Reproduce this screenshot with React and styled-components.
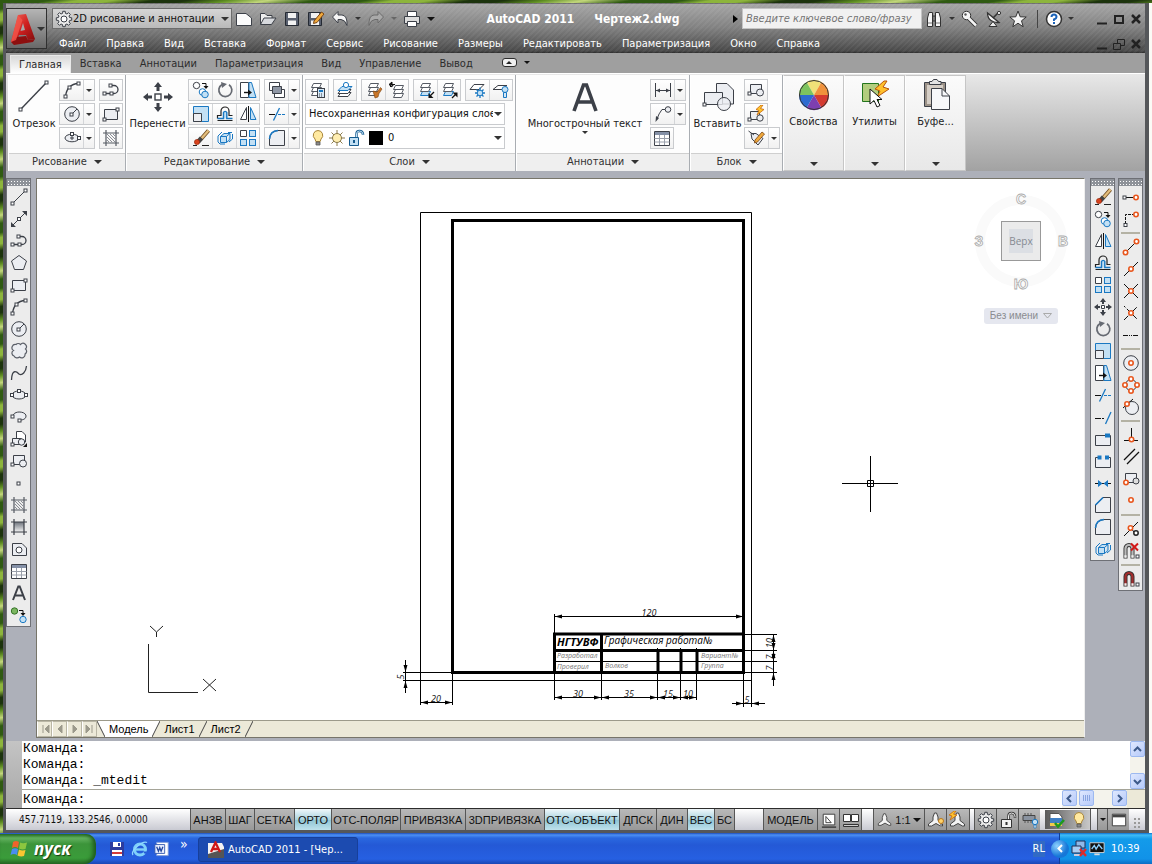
import React from 'react';
import styled, { createGlobalStyle, css } from 'styled-components';

const K = '#3c4048';
const B = '#1a78c2';
const LB = '#c3e0f4';
const O = '#e8561d';
const G = '#eceef2';
const ui = `"DejaVu Sans Condensed", "DejaVu Sans", sans-serif`;

const Global = createGlobalStyle`
  * { box-sizing: border-box; }
  body { margin: 0; font: 11px/14px ${ui}; color: #222; }
  button, select, input { font: inherit; color: inherit; margin: 0; }
  button { border: 0; padding: 0; background: none; white-space: nowrap; }
  svg { display: block; flex: none; }
`;

/* ---------- drawing helpers ---------- */
const N = ({ x, y }) => <rect x={x - 1.5} y={y - 1.5} width="3" height="3" fill="#fff" stroke={K} />;
const R = ({ x, y }) => <circle cx={x} cy={y} r="2.2" fill="#fff" stroke={O} strokeWidth="1.6" />;
const L = ({ d, c = K, f = 'none', w = 1, ...o }) => <path d={d} stroke={c} fill={f} strokeWidth={w} {...o} />;

const Sheets = ({ b }) => (
  <>
    <L d="M5.5 10.5H13.5L11.5 14.5H3.5Z" f={b ? LB : '#fff'} c={b || '#555a63'} />
    <L d="M5.5 6.5H13.5L11.5 10.5H3.5Z" f="#fff" c="#555a63" />
    <L d="M5.5 2.5H13.5L11.5 6.5H3.5Z" f="#fff" c="#555a63" />
  </>
);
const Bolt = ({ x = 0, y = 0 }) => (
  <path transform={`translate(${x} ${y})`} d="M5 0L0 4.500L3 5.500L1 10L8 4.500L4.500 3.500L7 0Z" fill="#ffc52e" stroke="#c8660a" strokeWidth=".8" />
);
const Bulb = () => (
  <>
    <path d="M9 1.500a4.800 4.800 0 0 1 3 8.500l-.8 2.500H6.800L6 10A4.800 4.800 0 0 1 9 1.500Z" fill="#ffe9a0" stroke="#a8853a" />
    <path d="M7 13h4v3H7Z" fill="#8a8a8a" stroke="#555" strokeWidth=".8" />
  </>
);
const Magnet = ({ c, e }) => (
  <>
    <path d="M3.500 16.500V6.500a3.500 3.500 0 0 1 7 0v10" fill="none" stroke="#333" strokeWidth="4" />
    <path d="M3.500 15.500V6.500a3.500 3.500 0 0 1 7 0v9" fill="none" stroke={c} strokeWidth="2.200" />
    <path d="M2.400 14.500h2.200M9.400 14.500h2.200" stroke={e} strokeWidth="2.500" /><N x={15.5} y={14.5} />
  </>
);
const Annot = () => <path d="M7.500 2H9.500L11 6V9.500L15.500 13V15H13.500L9 12.500L4.500 15H1.500V13L6 9.500V6Z" fill="#f4f4f4" stroke="#444" />;

const gearPath = Array.from({ length: 8 }, (_, i) => {
  const at = (r, a) => {
    const t = ((i * 45 + a) * Math.PI) / 180;
    return `${(9 + r * Math.cos(t)).toFixed(2)} ${(9 + r * Math.sin(t)).toFixed(2)}`;
  };
  return `${i ? 'L' : 'M'}${at(5.8, -14)}L${at(7.8, -9)}L${at(7.8, 9)}L${at(5.8, 14)}`;
}).join('') + 'Z';

const icons = {
  line: <><L d="M2 16L16 2" /><N x={2.5} y={15.5} /><N x={15.5} y={2.5} /></>,
  xline: <><L d="M3 15L15 3" /><path d="M17 1v5l-5-5ZM1 17v-5l5 5Z" fill={K} /><N x={9} y={9} /></>,
  pline: <><L d="M2 12.500H12a4 4 0 0 0 0-8H9" w={1.3} /><N x={2.5} y={12.5} /><N x={9.5} y={12.5} /><N x={8.5} y={4.5} /></>,
  polygon: <L d="M9 1.500L16.500 7L13.500 15.500H4.500L1.500 7Z" f={G} />,
  rect: <><L d="M2.500 4.500H15.500V14.500H2.500Z" f={G} /><N x={2.5} y={14.5} /><N x={15.5} y={4.5} /></>,
  arc: <><L d="M2.500 15.500Q4 3 15.500 2.500" w={1.3} /><N x={2.5} y={15.5} /><N x={6.5} y={6.5} /><N x={15.5} y={2.5} /></>,
  circle: <><circle cx="9" cy="9" r="7.300" fill={G} stroke={K} /><L d="M9 9L14 4" /><N x={8.5} y={9.5} /></>,
  cloud: <L d="M3.500 8.500A3.300 3.300 0 0 1 6 2.500A3 3 0 0 1 10.500 2.500A3.300 3.300 0 0 1 15.500 7A3 3 0 0 1 15 12A3.300 3.300 0 0 1 9.500 15A3.500 3.500 0 0 1 4 14A3 3 0 0 1 3.500 8.500Z" f={G} w={1.2} c="#5b5f68" />,
  spline: <L d="M1.500 16C2 4 7 8 9 10C12 12 16 8 16.500 2" w={1.3} />,
  ellipse: <><ellipse cx="9" cy="9" rx="7" ry="4" fill={G} stroke={K} /><N x={2} y={9} /><N x={16} y={9} /><N x={9} y={5} /></>,
  ellipse2: <><ellipse cx="9" cy="9" rx="7" ry="3.800" fill={G} stroke={K} /><L d="M9 7v4M7 9h4" /><N x={9} y={5} /><N x={16} y={9} /></>,
  ellarc: <><L d="M2.500 9C3 2 16 3 16 8C16 11 13 12 10 12" f={G} /><N x={2.5} y={8.5} /><N x={9.5} y={12.5} /></>,
  insert: <><L d="M6.500 9V1.500H12L15.500 5V12H9" f="#fff" /><L d="M2.500 8.500H11.500V14.500H2.500Z" f={G} /><N x={2.5} y={14.5} /><circle cx="11.500" cy="12" r="3.200" fill={G} stroke={K} /><path d="M17 13v4h-4Z" fill="#111" /></>,
  block: <><L d="M3.500 3.500H14.500V12.500H3.500Z" f={G} /><N x={2.5} y={12.5} /><circle cx="13" cy="11.500" r="3.500" fill={G} stroke={K} /></>,
  editblock: <><L d="M3.500 6.500H12.500V14.500H3.500Z" f={G} /><N x={2.5} y={14.5} /><circle cx="13" cy="13" r="3.200" fill={G} stroke={K} /><Bolt x={9} /></>,
  editattr: <><L d="M3 4.500H8L15 9.500L10 16L4 10Z" f={G} /><L d="M.500 2L6 6" /><path d="M7 11L14 3L16.500 5L9.500 13L6.500 14Z" fill="#f0a93c" stroke="#7a4512" strokeWidth=".8" /></>,
  point: <N x={8.5} y={9.5} />,
  hatch: <><L d="M4 1V17M14 1V17M1 4H17M1 14H17" w={1.2} c="#555a63" /><L d="M5 8L10 13M5 5L13 13M8 5L13 10M11 5L13 7M5 11L7 13" c="#8a8d94" /></>,
  gradient: <><path d="M4 4h10v10H4Z" fill="url(#hg)" /><L d="M4 1V17M14 1V17M1 4H17M1 14H17" w={1.2} /></>,
  region: <><L d="M2.500 3.500H12L16.500 8V15.500H2.500Z" f={G} /><circle cx="9" cy="10" r="3" fill="#fff" stroke={K} /></>,
  table: <><L d="M1.500 2.500H16.500V16.500H1.500Z" f="#fff" /><path d="M2 3H16V6H2Z" fill="#8490a6" /><L d="M1.500 9.500H16.500M1.500 13H16.500M6.500 6V16M11.500 6V16" c="#9aa0ab" /></>,
  text: <L d="M3 16L8.300 2.500H9.700L15 16M5 11.500H13" w={2} />,
  addsel: <><circle cx="4.500" cy="5" r="3.200" fill="#7bb661" stroke="#37752a" /><circle cx="13" cy="13.500" r="3.200" fill={LB} stroke={B} /><L d="M9 4.500H13V7" c="#111" /><path d="M10.500 7h5L13 10Z" fill="#111" /></>,
  erase: <>
    <path d="M16.500 1.500L9 10" stroke="#6e4a1e" strokeWidth="4" /><path d="M16.500 1.500L9 10" stroke="#e3bd7c" strokeWidth="2.400" />
    <path d="M9.500 9L6 13" stroke="#444" strokeWidth="4.500" /><circle cx="5" cy="13" r="2.600" fill="#d8421c" stroke="#8f2408" strokeWidth=".6" />
    <L d="M1 16.500H5M10 16.500H17" c="#222" />
  </>,
  copy: <><circle cx="4.500" cy="4.500" r="3.200" fill="#fff" stroke={K} /><circle cx="10.500" cy="11" r="3.300" fill="#fff" stroke={B} /><circle cx="13" cy="13.500" r="3.300" fill={LB} stroke={B} /><L d="M10 2.500H14V5" c="#111" /><path d="M11.500 5h5L14 8Z" fill="#111" /></>,
  mirror: <><L d="M7.500 2.500V14.500H1.500Z" f="#fff" /><L d="M11.500 2.500V14.500H17Z" f={LB} c={B} /><L d="M9.500 1V17" c="#111" /></>,
  offset: <><L d="M1.500 13.500V10.500H5V6A4 4 0 0 1 13 6V10.500H16.500M1.500 15.500H16.500" c="#222" w={1.2} /><L d="M1.500 13.500H7.500V7.500A1.800 1.800 0 0 1 10.800 7.500V13.500H16.500" c={B} w={1.400} f={LB} /></>,
  array: <><L d="M1.500 1.500H7.500V7.500H1.500Z" f="#fff" />{[[10.5, 1.5], [1.5, 10.5], [10.5, 10.5]].map(([x, y]) => <rect key={`${x}${y}`} x={x} y={y} width="6" height="6" fill={LB} stroke={B} />)}</>,
  move: <><path d="M9 0l3 4H6ZM9 18l3-4H6ZM0 9l4-3v6ZM18 9l-4-3v6Z" fill={K} /><L d="M9 3v3M9 12v3M3 9h3M12 9h3" w={2} /><L d="M7.500 7.500H10.500V10.500H7.500Z" f="#fff" /></>,
  rotate: <><L d="M6 3.500A6.500 6.500 0 1 0 13 3.700" c="#666a72" w={1.7} /><path d="M5 1l6 2-5 4Z" fill="#666a72" /></>,
  scale: <><L d="M1.500 1.500H16.500V16.500H1.500Z" f={LB} c={B} /><L d="M1.500 8.500H9.500V16.500H1.500Z" f={G} /></>,
  stretch: <><L d="M1.500 1.500H9.500V16.500H1.500Z" f="#fff" /><path d="M10 1.500H12.500L17 16.500H10Z" fill={LB} stroke={B} /><L d="M5 11.500H10" c="#111" w={1.4} /><path d="M9 8.500v6l4-3Z" fill="#111" /></>,
  trim: <><L d="M1 9.500H7" c="#111" /><L d="M10 9.500H17" c={B} strokeDasharray="3 1" /><L d="M5.500 15.500L11.500 3" c={B} w={1.3} /></>,
  extend: <><L d="M1 10.500H11" c="#111" strokeDasharray="6 1 2 1" /><L d="M11.500 16L17 4" c={B} w={1.3} /></>,
  breakpt: <><L d="M1.500 5.500H16.500V15.500H1.500Z" f={G} /><path d="M11 3.500h5v4h-5Z" fill={B} /></>,
  brk: <><L d="M1.500 5.500H16.500V15.500H1.500Z" f={G} /><path d="M6.500 4h5v3h-5Z" fill="#ececec" /><path d="M3.500 3.500h4v4h-4ZM11 3.500h4v4h-4Z" fill={B} /></>,
  join: <><L d="M1 9.500H17" c="#111" /><path d="M4 6v7l4.500-3.500ZM14 6v7L9.500 9.500Z" fill={B} /></>,
  chamfer: <><L d="M9 1.500H16.500V16.500H1.500V9L9 1.500" f={G} /><L d="M1.500 9L9 1.500" c={B} w={1.600} /></>,
  fillet: <><L d="M10 1.500H16.500V16.500H1.500V10Q2 2 10 1.500" f={G} /><L d="M1.500 10Q2 2 10 1.500" c={B} w={1.600} /></>,
  explode: <><L d="M4.500 7.500H10.500V13.500H4.500ZM4.500 7.500L8 4.500H14L10.500 7.500M14 4.500V10.500L10.500 13.500" f={LB} c={B} /><L d="M2 7V13L4 15H9M2 7L6 3M13 13L16.500 10V5M12 3.500H16" c={B} /></>,
  order: <><L d="M1.500 1.500H11.500V9.500H1.500Z" f="#fff" /><L d="M6.500 8.500H16.500V16.500H6.500Z" f="#fff" /><path d="M4.500 5.500h9v7h-9Z" fill="#8f97a5" stroke={K} /></>,
  temptrack: <><L d="M4 9.500H13" c="#111" /><N x={2.5} y={9.5} /><R x={14} y={9.5} /></>,
  snapfrom: <><L d="M3.500 14V4.500H12" c="#111" strokeDasharray="3 1" /><N x={3.5} y={15} /><R x={14} y={4.5} /></>,
  endpoint: <><L d="M3 15L15 3" c="#111" /><R x={3.5} y={14.5} /><R x={14.5} y={3.5} /></>,
  midpoint: <><L d="M2 16L16 2" c="#111" /><R x={9} y={9} /></>,
  intersect: <><L d="M2 2L16 16M2 16L16 2" c="#111" /><R x={9} y={9} /></>,
  apparent: <><L d="M2 2L16 16" c="#111" strokeDasharray="2 2 14 2 2" /><L d="M2 16L16 2" c="#111" strokeDasharray="6 2 2 2" /><R x={9} y={9} /></>,
  extension: <L d="M1 9.500H17" c="#111" strokeDasharray="5 1 1 1 1 1" />,
  center: <><circle cx="9" cy="9" r="7.300" fill={G} stroke={K} /><R x={9} y={9} /></>,
  quadrant: <><circle cx="9" cy="9" r="5.500" fill={G} stroke={K} /><R x={9} y={3} /><R x={9} y={15} /><R x={3} y={9} /><R x={15} y={9} /></>,
  tangent: <><circle cx="10" cy="10" r="6.500" fill={G} stroke={K} /><L d="M1 10L11 1" c="#111" /><R x={5} y={6} /></>,
  perp: <><L d="M9.500 2V14.500M2 14.500H16" c="#111" /><R x={9.5} y={13.5} /></>,
  parallel: <L d="M2 12L13 1M5 16L17 4" c="#111" w={1.3} />,
  snapinsert: <><L d="M3.500 3.500H14.500V12.500H3.500Z" f={G} /><circle cx="14" cy="11" r="3" fill="#ddd" stroke={K} /><R x={4} y={12.5} /></>,
  node: <R x={9} y={8} />,
  nearest: <><L d="M2 16L16 2" c="#111" /><L d="M8 7L12 12" c="#111" /><R x={8.5} y={8} /><circle cx="14" cy="13" r="2.200" fill="#fff" stroke="#222" strokeWidth="1.500" /></>,
  snapnone: <><Magnet c="#bbb" e="#eee" /><L d="M9 1.500L16 8.500M16 1.500L9 8.500" c="#d21818" w={2} /></>,
  osnap: <Magnet c="#a32d2d" e="#eee" />,
  layprops: <><Sheets /><rect x="9.500" y="7.500" width="7" height="9" fill="#d9e9f6" stroke={K} /><path d="M11 9h4v2h-4Z" fill={B} /><L d="M11 13h4M11 15h4" strokeDasharray="1 1" /></>,
  laymake: <><L d="M5 11.500H15L12 15.500H2Z" f="#fff" /><L d="M5 8.500H15L12 12.500H2Z" f="#fff" /><L d="M6 5.500H16L12 9.500H2Z" c={B} f={LB} /><circle cx="10" cy="4" r="2.600" fill="#fff" stroke={B} /></>,
  laymatch: <><Sheets /><path d="M8 10L12 11L15.500 6.500L17 8L14 12.500L13 16L10 17Z" fill="#c9762a" stroke="#7a4512" strokeWidth=".6" /></>,
  layprev: <><g transform="translate(2 2)"><Sheets /></g><L d="M7 3.500H2.500V6M1 3.500L4 1V6Z" c="#111" f="#111" /></>,
  layiso: <><Sheets b={B} /><path d="M17 11L13 15" stroke="#111" strokeWidth="1.300" /><path d="M11.500 12v5h5Z" fill="#111" /></>,
  layuniso: <><Sheets b={B} /><path d="M12 17L16 13" stroke="#111" strokeWidth="1.300" /><path d="M12.500 11.500h5v5Z" fill="#111" /></>,
  layfreeze: <><L d="M5 3.500H15L10 8.500H1Z" f="#fff" /><L d="M11 6.500V17M6 12H16M7.500 8.500L14.500 15.500M14.500 8.500L7.500 15.500" c={B} w={1.3} /><circle cx="11" cy="12" r="2.800" fill={LB} stroke={B} /></>,
  layoff: <><L d="M6 4.500H15L10 8.500H1Z" f="#fff" /><circle cx="13" cy="8.500" r="3" fill={LB} stroke={B} /><path d="M11.500 11.500h3v5h-3Z" fill="#d6e8f6" stroke={B} /></>,
  dim: <><L d="M1.500 2V16M16.500 2V16M2 9.500H16" /><path d="M2 9.500l4-2v4ZM16 9.500l-4-2v4Z" fill={K} /></>,
  leader: <><circle cx="14" cy="4.500" r="2.800" fill={G} stroke={K} /><L d="M11 4.500H8Q5 8 2.500 15" /><path d="M1.500 17L2 11L5 13Z" fill={K} /></>,
  bulb: <Bulb />,
  sun: <><L d="M9 1V17M1 9H17M3.500 3.500L14.500 14.500M14.500 3.500L3.500 14.500" c="#8a7a4a" /><circle cx="9" cy="9" r="4.500" fill="#ffeeb0" stroke="#8a7a4a" /></>,
  unlock: <><L d="M9.500 9V5Q9.500 2 12.500 2T16 5V6" c="#155b8f" w={2.4} /><L d="M9.500 9V5Q9.500 2 12.500 2T16 5V6" c={LB} w={1} /><path d="M2.500 8.500H11.500V16.500H2.500Z" fill={LB} stroke="#155b8f" /><L d="M7 11v3" c="#155b8f" w={2} /></>,
  new: <path d="M1.500 3.500H11L16.500 8V15.500H1.500Z" fill="#fbfbfb" stroke={K} />,
  open: <><path d="M1.500 14.500V3.500H6L8 5.500H13V8" fill="#eee" stroke={K} /><path d="M1.500 14.500L5 8H17L12.500 14.500Z" fill="#d7d9dd" stroke={K} /></>,
  save: <><path d="M2.500 2.500H15.500V15.500H2.500Z" fill="#59606f" stroke="#252a33" /><path d="M5 3H13V8H5ZM5 10.500H13V15H5Z" fill="#f2f2f2" /></>,
  saveas: <><path d="M1.500 2.500H14.500V15.500H1.500Z" fill="#59606f" stroke="#252a33" /><path d="M4 3H12V8H4ZM4 10.500H12V15H4Z" fill="#f2f2f2" /><path d="M7 11L14.500 2L17 4L10 12.500L6.500 13.500Z" fill="#f0a93c" stroke="#7a4512" /></>,
  undo: <path d="M1.500 7L7 1.500V5H11Q16.500 5.500 16 15.500Q14 9.500 10 9.500H7V13Z" fill="#f6f6f6" stroke={K} />,
  redo: <path d="M16.500 7L11 1.500V5H7Q1.500 5.500 2 15.500Q4 9.500 8 9.500H11V13Z" fill="#a9a9a9" stroke="#6b6b6b" />,
  print: <><path d="M4.500 1.500H13.500V7H4.500Z" fill="#fff" stroke={K} /><path d="M1.500 6.500H16.500V13.500H1.500Z" fill="#dcdcdc" stroke={K} /><path d="M4.500 11.500H13.500V16.500H4.500Z" fill="#fff" stroke={K} /></>,
  gear: <><path d={gearPath} fill="#ececec" stroke={K} /><circle cx="9" cy="9" r="3" fill="#fff" stroke={K} /></>,
  binoc: <><path d="M2.500 16.500V8L4 2.500H7.500V16.500ZM15.500 16.500V8L14 2.500H10.500V16.500Z" fill="#f5f5f5" stroke="#333" /><path d="M7.500 6H10.500V11H7.500Z" fill="#777" stroke="#333" /><L d="M3 13H7M11 13H15" c="#777" /></>,
  key: <><path d="M7.500 8L15 15.500M12 13L13.500 11.500" stroke="#333" strokeWidth="4.500" /><circle cx="5.500" cy="5.500" r="4.200" fill="#f5f5f5" stroke="#333" /><path d="M7.500 8L15 15.500" stroke="#f5f5f5" strokeWidth="2.500" /><circle cx="4.500" cy="4.500" r="1.200" fill="#555" /></>,
  dish: <><path d="M2.500 3C2.500 10 8 13 14 12.500Z" fill="#f5f5f5" stroke="#333" strokeWidth="1.300" /><path d="M8 8L14 2" stroke="#333" strokeWidth="1.600" /><path d="M4 16.500L8 11.500L12 16.500Z" fill="#eee" stroke="#333" /><circle cx="14" cy="3" r="1.600" fill="#fff" stroke="#333" /></>,
  star: <path d="M9 1L11.200 6.800L17.200 7L12.500 10.800L14.200 16.800L9 13.200L3.800 16.800L5.500 10.800L.8 7L6.800 6.800Z" fill="#f5f5f5" stroke="#333" />,
  paperL: <><path d="M2.500 2.500H15.500V14.500H2.500Z" fill="#fff" stroke="#333" /><path d="M5.500 5L11.500 12H5.500Z" fill="none" stroke="#333" /><L d="M1 17H17" c="#333" w={1.500} /></>,
  twoview: <><path d="M1.500 3.500H8.500V10.500H1.500ZM9.500 3.500H16.500V10.500H9.500Z" fill="#fff" stroke="#333" /><path d="M1.500 13.500H16.500V15.500H1.500Z" fill="#ccc" stroke="#333" /></>,
  annot: <Annot />,
  annotbulb: <><Annot /><circle cx="14" cy="10" r="2.500" fill="#ffd36b" stroke="#b8761b" /><path d="M13 13h2v3h-2Z" fill="#888" /></>,
  annotbolt: <><Annot /><g transform="scale(1 .9)"><Bolt /></g></>,
  unlockGray: <><L d="M9.500 9V5Q9.500 2 12.500 2T16 5V7" c="#333" w={2.4} /><L d="M9.500 9V5Q9.500 2 12.500 2T16 5V6.500" c="#eee" w={1} /><path d="M2.500 8.500H12.500V16.500H2.500Z" fill="#f4f4f4" stroke="#333" /><L d="M7.500 11v3" c="#333" w={2} /></>,
  chip: <><L d="M4 2V12M7 2V12M10 2V12" c="#555" /><path d="M2 4.500H14V9.500H2Z" fill="#8a93a0" stroke="#444" /><circle cx="14" cy="11" r="2.700" fill={LB} stroke={B} /><path d="M13 14h2v3h-2Z" fill="#eee" stroke={B} strokeWidth=".7" /></>,
  sheetok: <><path d="M3 2.500H12L15 6V10H3Z" fill="#fff" stroke="#555" /><path d="M3 7H15V15H3Z" fill="#3f7fc4" /><path d="M3 12H15V15H3Z" fill="#f2ca4c" /><L d="M8 12L11 15.500L17 9" c="#1d9a1d" w={2.500} /></>,
  win: <><path d="M1.500 2.500H16.500V15.500H1.500Z" fill="#fff" stroke="#333" /><path d="M2 3H16V6H2Z" fill="#444" /></>,
  floppy: <><path d="M2 2H16V16H2Z" fill="#2c3c9e" /><path d="M5 2H13V7H5ZM4 10H14V16H4Z" fill="#fff" /><path d="M10 3h2v3h-2Z" fill="#2c3c9e" /><path d="M4 12H14V14H4Z" fill="#d33c3c" /></>,
  ie: <><circle cx="9" cy="9.500" r="5.500" fill="none" stroke="#7fd0fa" strokeWidth="3" /><path d="M4 9.500H14" stroke="#7fd0fa" strokeWidth="2.400" /><path d="M12 11.500H17L14 14Z" fill="#2459d6" /><path d="M2 15C-1 11 12 0 16 2.500" fill="none" stroke="#8fd8ff" strokeWidth="1.300" /></>,
  word: <><path d="M3 1.500H16V16.500H3Z" fill="#fff" stroke="#7a98d8" /><path d="M1 4H12V14H1Z" fill="#eaf0ff" stroke="#3158b0" /><L d="M3 6.500L5 11.500L6.500 7.500L8 11.500L10 6.500" c="#2348a0" w={1.500} /></>,
  acad: <><path d="M1 2H15L17 6V17H1Z" fill="#f3f3f3" /><path d="M1 17V13L17 8V17Z" fill="#555" /><L d="M4 11L8.500 1.500L13 11M6 8H11" c="#d01818" w={2.3} /></>,
  net: <><path d="M6 1h9v7H6Z" fill="#8fb9e8" stroke="#222e55" /><path d="M2 6h9v7H2Z" fill="#a8cdf3" stroke="#222e55" /><L d="M4 15h6" c="#ccd" w={2} /><L d="M10 9L16 16M16 9L10 16" c="#e02a2a" w={2.4} /></>,
  monitor: <><path d="M1 2H17V13H1Z" fill="#111" stroke="#ddd" /><path d="M3 9L6 5L8 9L11 4L15 9" fill="none" stroke="#8ed2ff" strokeWidth="1.500" /><path d="M6 14H12V16H6Z" fill="#ddd" /></>,
};

const Icon = ({ name, size = 18 }) => (
  <svg width={size} height={size} viewBox="0 0 18 18" aria-hidden="true">{icons[name]}</svg>
);

const Caret = styled.span`
  display: block; flex: none; width: 0; height: 0;
  border: solid transparent;
  border-width: ${p => p.$s || 3}px ${p => p.$s || 3}px 0;
  border-top-color: ${p => p.$c || '#333'};
`;

/* ---------- window frame ---------- */
const Desktop = styled.div`
  min-height: 100vh; display: flex; flex-direction: column;
  background: repeating-linear-gradient(170deg, #2f5a12 0 9px, #8db53c 14px 20px, #1c330d 27px 33px, #5f8f22 40px, #c3d77c 47px, #2f5a12 55px);
`;
const Defs = styled.svg`position: absolute;`;
const Window = styled.main`
  flex: 1; display: flex; flex-direction: column; min-width: 0;
  margin: 3px 3px 0; background: #adb0b9;
  border: solid #55575a; border-width: 0 4px 3px 3px;
  box-shadow: 3px 0 0 #fbfbf6;
`;
const TitleBar = styled.header`
  display: flex; height: 50px; padding: 0 2px 0 0;
  background: repeating-linear-gradient(135deg, #ffffff0c 0 2px, transparent 2px 4px), linear-gradient(#3b3b3b 0, #a5a5a5 1px, #828282 24px, #494949 48px, #2c2c2c 50px);
`;
const AppButton = styled.button`
  width: 41px; height: 41px; margin-top: 5px; border: 1px solid #303030;
  background: linear-gradient(#b5b5b5, #8e8e8e 50%, #686868);
  display: flex; align-items: center; gap: 1px; padding-left: 3px;
`;
const TitleRows = styled.div`flex: 1; min-width: 0; display: flex; flex-direction: column;`;
const TitleRow = styled.div`display: flex; align-items: center; height: ${p => p.$h}px; padding-left: ${p => p.$pl}px;`;
const Workspace = styled.div`
  width: 180px; height: 21px;
  border: 1px solid #6c6c6c; background: linear-gradient(#d6d6d6, #b9b9b9);
  display: flex; align-items: center; padding: 0 2px;
`;
const PlainSelect = styled.select`
  appearance: none; border: 0; background: transparent; padding: 0; flex: 1; min-width: 0; height: 18px; outline: 0; color: #111;
`;
const Tool = styled.button`
  width: ${p => p.$w || 24}px; height: 22px; display: flex; align-items: center; justify-content: center;
`;
const Title = styled.h1`
  flex: 1; margin: 0; display: flex; justify-content: center; gap: 20px;
  font: bold 12px/16px ${ui}; color: #fff; white-space: nowrap;
`;
const Search = styled.input`
  width: 180px; height: 21px; border: 1px solid #c4c4c4; background: #f1f1f1; padding: 0 3px; font-style: italic; border-radius: 0;
  &::placeholder { color: #747474; opacity: 1; }
`;
const VLine = styled.span`width: 1px; height: 18px; background: #444; margin: 0 7px;`;
const Menu = styled.nav`flex: 1; display: flex; gap: 20px;`;
const MenuItem = styled.button`color: #fff;`;
const WinButtons = styled.div`display: flex; gap: 2px; margin-left: ${p => p.$ml || 0}px;`;

const winGlyphs = {
  min: <path d="M1 10.500H11" stroke="#222" strokeWidth="2" />,
  max: <path d="M2 3H10V10H2Z" stroke="#222" strokeWidth="2" fill="none" />,
  restore: <path d="M4.500 5V1.500H11.500V7.500H8M.5 5.500H7.500V11.500H.5Z" stroke="#222" fill="none" />,
  close: <path d="M2 2L10 10M10 2L2 10" stroke="#222" strokeWidth="2.500" />,
};
const WinButton = ({ kind, label }) => (
  <Tool $w={15} aria-label={label}><svg width="12" height="12" viewBox="0 0 12 12">{winGlyphs[kind]}</svg></Tool>
);

/* ---------- ribbon ---------- */
const TabStrip = styled.div`
  display: flex; align-items: flex-end; height: 20px; padding-left: 4px; background: #9f9f9f;
`;
const RibbonTab = styled.button`
  height: 18px; padding: 0 9px; color: #2c2c2c; line-height: 16px;
  ${p => p.$on && css`padding: 0 8px; background: linear-gradient(#d8d8d8, #fff); border: 1px solid #e9e9e9; border-bottom: 0; line-height: 14px;`}
`;
const Pill = styled.button`
  width: 15px; height: 9px; margin: 0 7px 6px 20px; border: 1px solid #2d2d2d; border-radius: 3px; background: #f0f0f0;
  display: flex; align-items: center; justify-content: center;
`;
const PillArrow = styled(Caret)`border-width: 0 3px 3px; border-bottom-color: #222;`;
const Ribbon = styled.section`
  display: flex; height: 98px; padding: 1px 0 0 2px;
  background: linear-gradient(#e8e8e8, #a2a2a2); border-top: 1px solid #fff;
`;
const Panel = styled.section`
  width: ${p => p.$w}px; display: flex; flex-direction: column; background: #fdfdfd;
  border-right: 1px solid #a9adb2; border-left: 1px solid #fff;
`;
const PanelBody = styled.div`flex: 1; display: flex; gap: 4px; padding: 4px 0 0 ${p => p.$pl || 4}px;`;
const PanelTitle = styled.button`
  height: 18px; border-top: 1px solid #cfcfcf; background: #efefef; color: #333; padding-bottom: 2px;
  display: flex; align-items: center; justify-content: center; gap: 7px;
`;
const Big = styled.button`
  width: ${p => p.$w}px; height: 66px; display: flex; flex-direction: column; align-items: center; color: #222;
  svg { margin-bottom: 4px; }
`;
const Stack = styled.div`display: flex; flex-direction: column; align-items: flex-start; gap: 2px;`;
const Line = styled.div`display: flex; gap: 4px;`;
const Group = styled.div`
  display: flex; border: 1px solid #c9cbce; height: 22px; background: linear-gradient(#fff, #f1f1f1);
`;
const Small = styled.button`
  width: ${p => (p.$arrow ? 12 : 24)}px; display: flex; align-items: center; justify-content: center;
  &:first-child { width: 23px; } &:last-child { width: ${p => (p.$arrow ? 11 : 23)}px; } &:only-child { width: 22px; }
  & + & { border-left: 1px solid #d3d5d8; }
`;
const Tools = ({ names, arrow }) => (
  <Group>
    {names.map(n => <Small key={n} aria-label={n}><Icon name={n} /></Small>)}
    {arrow && <Small $arrow aria-label="ещё"><Caret /></Small>}
  </Group>
);
const Field = styled.div`
  width: 200px; height: 22px; border: 1px solid #c9cbce; background: #fff;
  display: flex; align-items: center; gap: 1px; padding: 0 2px 0 3px;
`;
const Swatch = styled.span`width: 14px; height: 14px; background: #000; margin: 0 4px 0 3px;`;
const Collapsed = styled.button`
  width: 61px; display: flex; flex-direction: column; align-items: center; color: #222;
  background: linear-gradient(#fbfbfb, #e8e8e8); border: 1px solid #c6c6c6; border-left-color: #fff;
  padding: 2px 0 4px;
  svg { margin-bottom: 3px; }
  span:last-child { margin-top: auto; }
`;

/* ---------- workspace ---------- */
const Work = styled.section`flex: 1; display: flex; padding: 7px 2px 3px 0; min-height: 0;`;
const ToolBox = styled.div`
  align-self: flex-start; width: 25px; margin-right: ${p => p.$mr}px; border: 1px solid #6e7076; background: #ececec;
  display: flex; flex-direction: column; align-items: center;
`;
const Grip = styled.div`
  width: 100%; height: 7px; background: radial-gradient(circle, #fff 0 1px, transparent 1px) 3px 1px / 3px 3px, #8e9299;
`;
const HLine = styled.span`width: 19px; height: 2px; margin: 2px 0; background: #b4b2a4;`;
const DrawArea = styled.div`
  flex: 1; min-width: 0; display: flex; flex-direction: column; margin-right: 5px;
  border: 1px solid #77756a; border-right-color: #eee; background: #fff;
`;
const Canvas = styled.div`position: relative; flex: 1; min-height: 540px; overflow: hidden;`;
const Model = styled.svg`position: absolute; inset: 0; width: 100%; height: 100%;`;
const ViewCube = styled.div`position: absolute; top: 8px; right: 11px; width: 104px; display: flex; flex-direction: column; align-items: center; gap: 16px;`;
const UcsButton = styled.button`
  width: 74px; height: 16px; border-radius: 3px; background: #e5e7ef; color: #8a8c90;
  display: flex; align-items: center; justify-content: center; gap: 5px; font: 10px/14px "Liberation Sans", sans-serif;
`;
const SheetTabs = styled.div`display: flex; height: 17px; background: #ece9d8; border-top: 1px solid #9c9a8a; font: 11px/16px "Liberation Sans", sans-serif;`;
const Nav = styled.button`
  width: 15px; border: 1px solid #b9b6a5; border-left-color: #fff; color: #9b998b; display: flex; align-items: center; justify-content: center;
`;
const SheetTab = styled.button`padding: 0 4px; color: #000; ${p => p.$on && 'background: #fff;'}`;

const Slash = ({ back, fill = 'none' }) => (
  <svg width="8" height="16" viewBox="0 0 8 16">
    <path d={back ? 'M0 0H8V16Z' : 'M0 0H8L0 16Z'} fill={fill} />
    <path d={back ? 'M0 0L8 16' : 'M8 0L0 16'} stroke="#444" fill="none" />
  </svg>
);

/* ---------- command line ---------- */
const Command = styled.section`display: flex; background: #a0a2a8; font: 13px/16px "Liberation Mono", monospace; color: #000;`;
const CommandGrip = styled(Grip)`width: 16px; height: auto; background: linear-gradient(#c4c4c4, #a8a8a8);`;
const CommandBody = styled.div`flex: 1; min-width: 0; background: #fff;`;
const History = styled.div`display: flex; justify-content: space-between; height: 49px; border-bottom: 1px solid #a5a498;`;
const Log = styled.pre`margin: 0; padding-left: 1px; font: inherit;`;
const Prompt = styled.div`display: flex; align-items: stretch; height: 18px; padding-left: 1px; label { line-height: 20px; }`;
const PromptInput = styled.input`flex: 1; min-width: 0; border: 0; padding: 0 8px; outline: 0;`;
const ScrollTrack = styled.div`display: flex; justify-content: space-between; background: #f4f3ec; flex-direction: ${p => (p.$v ? 'column' : 'row')}; ${p => !p.$v && 'width: 65px; border-right: 18px solid #ece9d8; box-sizing: content-box;'}`;
const ScrollButton = styled.button`
  width: 15px; height: 16px; border: 1px solid #9db9f0; border-radius: 2px; background: linear-gradient(135deg, #dfe8fe, #b6cafa);
  display: flex; align-items: center; justify-content: center;
`;
const Thumb = styled(ScrollButton)`margin-right: auto; margin-left: 2px;`;
const Chevron = ({ r, c = '#3d5a8a' }) => (
  <svg width="9" height="9" viewBox="0 0 9 9"><path d="M1 6L4.500 2.500L8 6" transform={`rotate(${r} 4.500 4.500)`} fill="none" stroke={c} strokeWidth="2" /></svg>
);

/* ---------- status bar ---------- */
const Status = styled.footer`display: flex; height: 22px; border-top: 1px solid #2c2c2c; background: linear-gradient(#fff, #c9cad2); font: 11px/20px "Liberation Sans", sans-serif; color: #111;`;
const Coords = styled.output`width: 184px; padding: 2px 0 0 13px; font: 10px/18px ${ui}; white-space: nowrap;`;
const Toggle = styled.button`
  width: ${p => p.$w}px; border-left: 1px solid #565656; display: flex; align-items: center; justify-content: center; gap: 2px;
  background: ${p => (p.$on ? 'linear-gradient(#f0f8fb, #a9d3df 50%, #8fc4d4 52%, #bfe2ec)' : 'linear-gradient(#b9b9b9, #989898)')};
`;
const Space = styled.span`width: ${p => p.$w}px; border-left: 1px solid #565656;`;
const Tray = styled.div`width: 45px; display: flex; align-items: center; justify-content: space-around; margin: 1px 0 1px 5px; background: linear-gradient(90deg, #5a5a5a, #c9c9c9);`;
const SizeGrip = styled.span`flex: 1; margin: 8px 3px 2px 4px; background: radial-gradient(circle, #999 0 1px, transparent 1px) 0 0 / 4px 4px;`;

/* ---------- taskbar ---------- */
const Taskbar = styled.nav`
  display: flex; height: 31px; align-items: stretch; color: #fff;
  background: linear-gradient(#1d4dbb 0, #4c90f4 2px, #2a68e0 5px, #2459d6 12px, #2660e2 26px, #1a47b4 31px);
`;
const Start = styled.button`
  width: 96px; margin-top: 1px; display: flex; align-items: center; gap: 5px; padding-left: 10px; border-radius: 0 10px 12px 0;
  background: linear-gradient(#2e7a2c, #62b25f 4px, #3c943a 10px, #3a9c3a 24px, #2a6f29);
  box-shadow: inset -3px 0 4px #1e5a1c; color: #fff; font: italic bold 17px/26px "Open Sans", sans-serif; text-shadow: 1px 1px 1px #143c13;
`;
const Quick = styled.div`display: flex; align-items: center; gap: 5px; padding-left: 12px; width: 102px; font-size: 14px; span { margin: 0 0 10px 5px; }`;
const Task = styled.button`
  width: 160px; height: 25px; margin-top: 4px; display: flex; align-items: center; gap: 3px; padding-left: 8px; color: #fff;
  border-radius: 3px; background: #1c4bb0; border: 1px solid #173f9a;
`;
const Lang = styled.span`margin: auto 14px auto auto; background: #316ac5; padding: 1px 0;`;
const Notify = styled.div`
  width: 93px; display: flex; align-items: center; gap: 1px; border-left: 1px solid #0d3e9c;
  background: linear-gradient(#0d6fd0 0, #3fbcf6 2px, #139bea 6px, #1192e8 26px, #0c6cc4);
`;
const Round = styled.button`
  width: 18px; height: 18px; border-radius: 9px; margin-left: -9px; background: radial-gradient(circle at 6px 6px, #8fd1ff, #1677d8 60%); display: flex; align-items: center; justify-content: center;
`;
const Clock = styled.time`margin-left: 5px;`;

const drawTools = ['line', 'xline', 'pline', 'polygon', 'rect', 'arc', 'circle', 'cloud', 'spline', 'ellipse', 'ellarc', 'insert', 'block', 'point', 'hatch', 'gradient', 'region', 'table', 'text', 'addsel'];
const modifyTools = ['erase', 'copy', 'mirror', 'offset', 'array', 'move', 'rotate', 'scale', 'stretch', 'trim', 'extend', 'breakpt', 'brk', 'join', 'chamfer', 'fillet', 'explode'];
const snapTools = ['temptrack', 'snapfrom', null, 'endpoint', 'midpoint', 'intersect', 'apparent', 'extension', null, 'center', 'quadrant', 'tangent', null, 'perp', 'parallel', 'snapinsert', 'node', null, 'nearest', 'snapnone', null, 'osnap'];
const modes = [['АНЗВ', 35], ['ШАГ', 29], ['СЕТКА', 40], ['ОРТО', 37, 1], ['ОТС-ПОЛЯР', 69], ['ПРИВЯЗКА', 65], ['3DПРИВЯЗКА', 79], ['ОТС-ОБЪЕКТ', 75, 1], ['ДПСК', 37], ['ДИН', 31], ['ВЕС', 27, 1], ['БС', 20]];
const menus = ['Файл', 'Правка', 'Вид', 'Вставка', 'Формат', 'Сервис', 'Рисование', 'Размеры', 'Редактировать', 'Параметризация', 'Окно', 'Справка'];
const tabs = ['Вставка', 'Аннотации', 'Параметризация', 'Вид', 'Управление', 'Вывод'];

const Bar = ({ names, mr }) => (
  <ToolBox $mr={mr}>
    <Grip />
    {names.map((n, i) => (n ? <Tool key={n} $w={22} aria-label={n}><Icon name={n} /></Tool> : <HLine key={i} />))}
  </ToolBox>
);

/* Dimension arrowhead, pointing back along the rotation */
const Tip = ({ x, y, r }) => <path d="M0 0L7 -2V2Z" transform={`translate(${x} ${y}) rotate(${r})`} />;
const Dim = ({ x, y, children, up }) => (
  <text fontSize="9" textAnchor="middle" transform={`translate(${x} ${y})${up ? ' rotate(-90)' : ''}`} fill="#111">{children}</text>
);

const Drawing = () => (
  <Model role="img" aria-label="Чертеж">
    <g transform="translate(-37 -179)" fontFamily={`"Open Sans", sans-serif`} fontStyle="italic">
      <g fill="none" stroke="#000">
        <path d="M420.500 705V212.500H751.500V707M403 680.500H752M403 672.500H452M452.500 672V705" />
        <path d="M452.500 220.500H743.500V672.500H452.500Z" strokeWidth="3" />
        <path d="M554.500 672V634H743M601.500 634V672M554 650.500H743M658 650V672M681 650V672M697 650V672" strokeWidth="3" />
        <path d="M554 661.500H743M743 634.500H777M743 650.500H777M743 661.500H777M743 672.500H777M554.500 614V634M743.500 672V707" />
        <path d="M554.500 616.500H743M554.500 697.500H696M554.500 672V700M601.500 672V700M657.500 648V700M680.500 648V700M696.500 648V700" />
        <path d="M420.500 702.500H452M732 703.500H765M405.500 660V693M773.500 634V686" />
        <path d="M842 483.500H898M870.500 456V512M867.500 480.500H873.500V486.500H867.500Z" />
        <path d="M148.500 644V692.500H198M150 626L156.500 632L163 626M156.500 632V637M203 679L216 691M216 679L203 691" stroke="#222" />
      </g>
      {[[555, 616.5, 0], [743, 616.5, 180], [555, 697.5, 0], [601, 697.5, 180], [602, 697.5, 0], [657, 697.5, 180], [658, 697.5, 0], [680, 697.5, 180], [681, 697.5, 0], [696, 697.5, 180], [421, 702.5, 0], [452, 702.5, 180], [743, 703.5, 180], [752, 703.5, 0], [405.5, 672, -90], [405.5, 681, 90], [773.5, 635, 90], [773.5, 650, -90], [773.5, 651, 90], [773.5, 661, -90], [773.5, 673, 90]].map(([x, y, r]) => <Tip key={`${x}-${y}-${r}`} x={x} y={y} r={r} />)}
      <Dim x={649} y={616}>120</Dim><Dim x={578} y={697}>30</Dim><Dim x={629} y={697}>35</Dim><Dim x={668} y={697}>15</Dim><Dim x={688} y={697}>10</Dim>
      <Dim x={436} y={702}>20</Dim><Dim x={747} y={703}>5</Dim><Dim x={404} y={677} up>5</Dim>
      <Dim x={773} y={643} up>10</Dim><Dim x={773} y={657} up>7</Dim><Dim x={773} y={668} up>7</Dim>
      <text x="557" y="646" fontSize="11" fontWeight="bold">НГТУВФ</text>
      <text x="604" y="644" fontSize="10">Графическая работа№</text>
      <g fontSize="7" fill="#777">
        <text x="557" y="658">Разработал</text><text x="557" y="669">Проверил</text><text x="605" y="668">Волков</text>
        <text x="701" y="658">Вариант№</text><text x="701" y="668">Группа</text>
      </g>
    </g>
  </Model>
);

const Letter = ({ x, y, children }) => (
  <text x={x} y={y} textAnchor="middle" fontFamily={`"Liberation Sans", sans-serif`} fontSize="14" fontWeight="bold" fill="#fff" stroke="#aaa" strokeWidth=".8">{children}</text>
);

export default function App() {
  return (
    <Desktop>
      <Global />
      <Defs width="0" height="0" aria-hidden="true">
        <defs>
          <linearGradient id="hg" x2="0" y2="1"><stop stopColor="#6d727b" /><stop offset="1" stopColor="#f4f4f4" /></linearGradient>
          <linearGradient id="red" x2="1" y2="1"><stop stopColor="#f26a5c" /><stop offset=".5" stopColor="#cf1f1f" /><stop offset="1" stopColor="#7d0d0d" /></linearGradient>
        </defs>
      </Defs>
      <Window>
        <TitleBar>
          <AppButton aria-label="Меню приложения">
            <svg width="26" height="36" viewBox="0 0 26 36">
              <path d="M1 31L8 4L16 3L25 28L18 29L16 24H9L7 31Z" fill="url(#red)" />
              <path d="M10.500 20L13 12L15 19Z" fill="#a8a8a8" />
              <path d="M7 26L1 31L4 34L23 31L25 28L18 29L16 25Z" fill="#8d0f0f" />
              <path d="M8 4L1 31L6 29L12.500 9Z" fill="#f4564b" opacity=".8" />
            </svg>
            <Caret $s={4} />
          </AppButton>
          <TitleRows>
            <TitleRow $h={31} $pl={5}>
              <Workspace>
                <Icon name="gear" />
                <PlainSelect aria-label="Рабочее пространство"><option>2D рисование и аннотации</option></PlainSelect>
                <Caret $s={4} />
              </Workspace>
              {['new', 'open', 'save', 'saveas', 'undo'].map(n => <Tool key={n} aria-label={n}><Icon name={n} /></Tool>)}
              <Tool $w={12} aria-label="Список отмены"><Caret /></Tool>
              <Tool aria-label="redo"><Icon name="redo" /></Tool>
              <Tool $w={12} aria-label="Список повтора"><Caret $c="#666" /></Tool>
              <Tool aria-label="Печать"><Icon name="print" /></Tool>
              <Tool $w={14} aria-label="Настройка"><Caret $s={4} $c="#111" /></Tool>
              <Title><span>AutoCAD 2011</span><span>Чертеж2.dwg</span></Title>
              <Tool $w={14} aria-label="Свернуть поиск"><svg width="5" height="8"><path d="M0 0L5 4L0 8Z" /></svg></Tool>
              <Search aria-label="Поиск" placeholder="Введите ключевое слово/фразу" />
              <Tool aria-label="Найти"><Icon name="binoc" /></Tool>
              <Tool $w={12} aria-label="Область поиска"><Caret /></Tool>
              <Tool aria-label="Подписка"><Icon name="key" /></Tool>
              <Tool aria-label="Связь"><Icon name="dish" /></Tool>
              <Tool aria-label="Избранное"><Icon name="star" /></Tool>
              <VLine />
              <Tool $w={18} aria-label="Справка">
                <svg width="18" height="18" viewBox="0 0 18 18"><circle cx="9" cy="9" r="7.500" fill="#fff" stroke="#333" strokeWidth="1.500" /><path d="M6.500 7Q6.500 4.500 9 4.500T11.500 7Q11.500 8.500 9 9.500V11M9 12V14" fill="none" stroke="#1c63b8" strokeWidth="2" /></svg>
              </Tool>
              <Tool $w={16} aria-label="Меню справки"><Caret /></Tool>
              <WinButtons $ml={15}><WinButton kind="min" label="Свернуть" /><WinButton kind="max" label="Развернуть" /><WinButton kind="close" label="Закрыть" /></WinButtons>
            </TitleRow>
            <TitleRow $h={19} $pl={12}>
              <Menu>{menus.map(m => <MenuItem key={m}>{m}</MenuItem>)}</Menu>
              <WinButtons><WinButton kind="min" label="Свернуть чертеж" /><WinButton kind="restore" label="Восстановить чертеж" /><WinButton kind="close" label="Закрыть чертеж" /></WinButtons>
            </TitleRow>
          </TitleRows>
        </TitleBar>

        <TabStrip>
          <RibbonTab $on>Главная</RibbonTab>
          {tabs.map(t => <RibbonTab key={t}>{t}</RibbonTab>)}
          <Pill aria-label="Свернуть ленту"><PillArrow /></Pill>
          <Tool $w={6} aria-label="Вид ленты"><Caret $c="#111" /></Tool>
        </TabStrip>

        <Ribbon>
          <Panel $w={118}>
            <PanelBody>
              <Big $w={42}>
                <svg width="34" height="34" viewBox="0 0 34 34"><path d="M4 30L29 4" stroke={K} strokeWidth="1.400" /><N x={3.5} y={30.5} /><N x={29.5} y={3.5} /></svg>
                Отрезок
              </Big>
              <Stack><Tools names={['arc']} arrow /><Tools names={['circle']} arrow /><Tools names={['ellipse2']} arrow /></Stack>
              <Stack><Tools names={['pline']} /><Tools names={['rect']} /><Tools names={['hatch']} /></Stack>
            </PanelBody>
            <PanelTitle>Рисование <Caret $s={4} /></PanelTitle>
          </Panel>
          <Panel $w={177}>
            <PanelBody>
              <Big $w={53}>
                <svg width="34" height="34" viewBox="0 0 34 34"><path d="M17 3l4 5h-8ZM17 33l4-5h-8ZM2 18l5-4v8ZM32 18l-5-4v8Z" fill={K} /><path d="M17 7v5M17 24v5M6 18h5M23 18h5" stroke={K} strokeWidth="3" /><rect x="14" y="15" width="6" height="6" fill="#fff" stroke={K} strokeWidth="1.400" /></svg>
                Перенести
              </Big>
              <Stack><Tools names={['copy', 'rotate', 'stretch']} /><Tools names={['scale', 'offset', 'mirror']} /><Tools names={['erase', 'explode', 'array']} /></Stack>
              <Stack><Tools names={['order']} arrow /><Tools names={['trim']} arrow /><Tools names={['fillet']} arrow /></Stack>
            </PanelBody>
            <PanelTitle>Редактирование <Caret $s={4} /></PanelTitle>
          </Panel>
          <Panel $w={213}>
            <PanelBody $pl={1}>
              <Stack>
                <Line><Tools names={['layprops']} /><Tools names={['laymake']} /><Tools names={['laymatch', 'layprev']} /><Tools names={['layiso', 'layuniso']} /><Tools names={['layfreeze', 'layoff']} /></Line>
                <Field><PlainSelect aria-label="Конфигурация слоев"><option>Несохраненная конфигурация слоев</option></PlainSelect><Caret $s={4} /></Field>
                <Field><Icon name="bulb" /><Icon name="sun" /><Icon name="unlock" /><Swatch /><PlainSelect aria-label="Слой"><option>0</option></PlainSelect><Caret $s={4} /></Field>
              </Stack>
            </PanelBody>
            <PanelTitle>Слои <Caret $s={4} /></PanelTitle>
          </Panel>
          <Panel $w={174}>
            <PanelBody $pl={7}>
              <Big $w={122}>
                <svg width="34" height="34" viewBox="0 0 34 34"><path d="M6 32L15.500 6H18.500L28 32M10 23H24" fill="none" stroke={K} strokeWidth="3.600" /></svg>
                Многострочный текст
                <Caret />
              </Big>
              <Stack><Tools names={['dim']} arrow /><Tools names={['leader']} arrow /><Tools names={['table']} /></Stack>
            </PanelBody>
            <PanelTitle>Аннотации <Caret $s={4} /></PanelTitle>
          </Panel>
          <Panel $w={93}>
            <PanelBody>
              <Big $w={45}>
                <svg width="34" height="34" viewBox="0 0 34 34"><path d="M15.500 14V4.500H26L32.500 11V25H20" fill={G} stroke={K} /><path d="M3.500 13.500H21.500V25.500H3.500Z" fill={G} stroke={K} /><N x={3.5} y={25.5} /><circle cx="23" cy="25" r="6.500" fill={G} fillOpacity=".8" stroke={K} /></svg>
                Вставить
              </Big>
              <Stack><Tools names={['block']} /><Tools names={['editblock']} /><Tools names={['editattr']} arrow /></Stack>
            </PanelBody>
            <PanelTitle>Блок <Caret $s={4} /></PanelTitle>
          </Panel>
          <Collapsed>
            <svg width="34" height="34" viewBox="0 0 34 34">
              {[['#f0e178', -30], ['#f0923c', 30], ['#d43a30', 90], ['#7d3fb0', 150], ['#2d6bd0', 210], ['#7dc35e', 270]].map(([c, a]) => (
                <path key={a} d="M17 17V2A15 15 0 0 1 30 9.500Z" fill={c} transform={`rotate(${a} 17 17)`} />
              ))}
              <circle cx="17" cy="17" r="14.500" fill="none" stroke="#333" />
            </svg>
            Свойства<Caret $s={4} />
          </Collapsed>
          <Collapsed>
            <svg width="34" height="34" viewBox="0 0 34 34"><path d="M4.500 5.500H20.500V23.500H4.500Z" fill="#b3cd7e" stroke="#23751d" /><path d="M26 3L17 11L22 13L19 19L31 11L25 9L29 3Z" fill="#ffc02c" stroke="#b8540a" /><path d="M12 11V26L16 22.500L19 29L22 27.500L19 21.500H24Z" fill="#fff" stroke="#111" /></svg>
            Утилиты<Caret $s={4} />
          </Collapsed>
          <Collapsed>
            <svg width="34" height="34" viewBox="0 0 34 34"><path d="M5.500 4.500H26.500V28.500H5.500Z" fill="#9c9288" stroke={K} /><path d="M8 7H24V26H8Z" fill="#d5cec6" /><path d="M10.500 6.500V3.500H13L14.500 1.500H18L19.500 3.500H22V6.500Z" fill="#e4e4e4" stroke={K} /><path d="M12.500 10.500H23L30.500 18V31.500H12.500Z" fill="#f7f8fa" stroke={K} /><path d="M23 10.500V18H30.500" fill="none" stroke={K} /></svg>
            Буфе...<Caret $s={4} />
          </Collapsed>
        </Ribbon>

        <Work>
          <Bar names={drawTools} mr={5} />
          <DrawArea>
            <Canvas>
              <Drawing />
              <ViewCube>
                <svg width="104" height="105" viewBox="0 0 104 105">
                  <circle cx="52" cy="54" r="41" fill="none" stroke="#fafafa" strokeWidth="10" />
                  <rect x="32.500" y="34.500" width="39" height="39" fill="#ebebeb" stroke="#999" />
                  <rect x="40" y="42" width="24" height="24" fill="#dcdfe4" />
                  <text x="52" y="58" textAnchor="middle" fontFamily={`"Open Sans", sans-serif`} fontSize="10" fill="#858a92">Верх</text>
                  <Letter x={52} y={17}>С</Letter><Letter x={52} y={102}>Ю</Letter><Letter x={10} y={59}>З</Letter><Letter x={94} y={59}>В</Letter>
                </svg>
                <UcsButton>Без имени <svg width="9" height="6"><path d="M.5 .5H8.500L4.500 5Z" fill="none" stroke="#aaa" /></svg></UcsButton>
              </ViewCube>
            </Canvas>
            <SheetTabs>
              {['M3 1V9M9 1L5 5L9 9Z', 'M7 1L3 5L7 9Z', 'M3 1L7 5L3 9Z', 'M7 1V9M1 1L5 5L1 9Z'].map(d => (
                <Nav key={d} aria-label="Лист"><svg width="10" height="10"><path d={d} fill="#9b998b" stroke="#9b998b" /></svg></Nav>
              ))}
              <Slash back fill="#fff" /><SheetTab $on>Модель</SheetTab><Slash fill="#fff" />
              <SheetTab>Лист1</SheetTab><Slash /><SheetTab>Лист2</SheetTab><Slash />
            </SheetTabs>
          </DrawArea>
          <Bar names={modifyTools} mr={3} />
          <Bar names={snapTools} mr={0} />
        </Work>

        <Command>
          <CommandGrip />
          <CommandBody>
            <History>
              <Log>{'Команда:\nКоманда:\nКоманда: _mtedit'}</Log>
              <ScrollTrack $v>
                <ScrollButton aria-label="Вверх"><Chevron r={0} /></ScrollButton>
                <ScrollButton aria-label="Вниз"><Chevron r={180} /></ScrollButton>
              </ScrollTrack>
            </History>
            <Prompt>
              <label htmlFor="cmd">Команда:</label>
              <PromptInput id="cmd" />
              <ScrollTrack>
                <ScrollButton aria-label="Влево"><Chevron r={-90} /></ScrollButton>
                <Thumb aria-label="Полоса прокрутки"><svg width="9" height="8"><path d="M1.500 1V7M3.500 1V7M5.500 1V7M7.500 1V7" stroke="#8aa5e0" /></svg></Thumb>
                <ScrollButton aria-label="Вправо"><Chevron r={90} /></ScrollButton>
              </ScrollTrack>
            </Prompt>
          </CommandBody>
        </Command>

        <Status>
          <Coords>457.7119, 133.2546, 0.0000</Coords>
          {modes.map(([t, w, on]) => <Toggle key={t} $w={w} $on={on}>{t}</Toggle>)}
          <Space $w={29} />
          <Toggle $w={54}>МОДЕЛЬ</Toggle>
          <Toggle $w={22} aria-label="Лист"><Icon name="paperL" size={16} /></Toggle>
          <Toggle $w={22} aria-label="Быстрый просмотр"><Icon name="twoview" /></Toggle>
          <Space $w={12} />
          <Toggle $w={51}><Icon name="annot" size={16} />1:1 <Caret $s={4} $c="#111" /></Toggle>
          <Toggle $w={22} aria-label="Видимость аннотаций"><Icon name="annotbulb" /></Toggle>
          <Toggle $w={23} aria-label="Автомасштаб"><Icon name="annotbolt" /></Toggle>
          <Space $w={5} />
          <Toggle $w={22} aria-label="Рабочее пространство"><Icon name="gear" /></Toggle>
          <Toggle $w={22} aria-label="Закрепление"><Icon name="unlockGray" /></Toggle>
          <Toggle $w={22} aria-label="Ускорение"><Icon name="chip" /></Toggle>
          <Tray><Icon name="sheetok" /><Icon name="bulb" /></Tray>
          <Space $w={7} />
          <Toggle $w={10} aria-label="Меню строки"><Caret $c="#111" /></Toggle>
          <Toggle $w={22} aria-label="Очистить экран"><Icon name="win" size={16} /></Toggle>
          <SizeGrip />
        </Status>
      </Window>

      <Taskbar>
        <Start>
          <svg width="19" height="18" viewBox="0 0 19 18"><path d="M3 2Q6 0 9 2L8 8Q5 6 2 8Z" fill="#f0632c" /><path d="M10 2.500Q13 4 17 2.500L15.500 9Q12 10 9 8.500Z" fill="#8cc63f" /><path d="M2 9Q5 7.500 8 9L7 15Q4 13 .5 15Z" fill="#4a8df0" /><path d="M9 9.500Q12 11 15.500 10L14 16Q11 17 7.500 15.500Z" fill="#fbc631" /></svg>
          пуск
        </Start>
        <Quick><Icon name="floppy" /><Icon name="ie" /><Icon name="word" size={16} /><span>»</span></Quick>
        <Task><Icon name="acad" />AutoCAD 2011 - [Чер...</Task>
        <Lang>RL</Lang>
        <Notify><Round aria-label="Показать значки"><Chevron r={-90} c="#fff" /></Round><Icon name="net" /><Icon name="monitor" size={16} /><Clock>10:39</Clock></Notify>
      </Taskbar>
    </Desktop>
  );
}
